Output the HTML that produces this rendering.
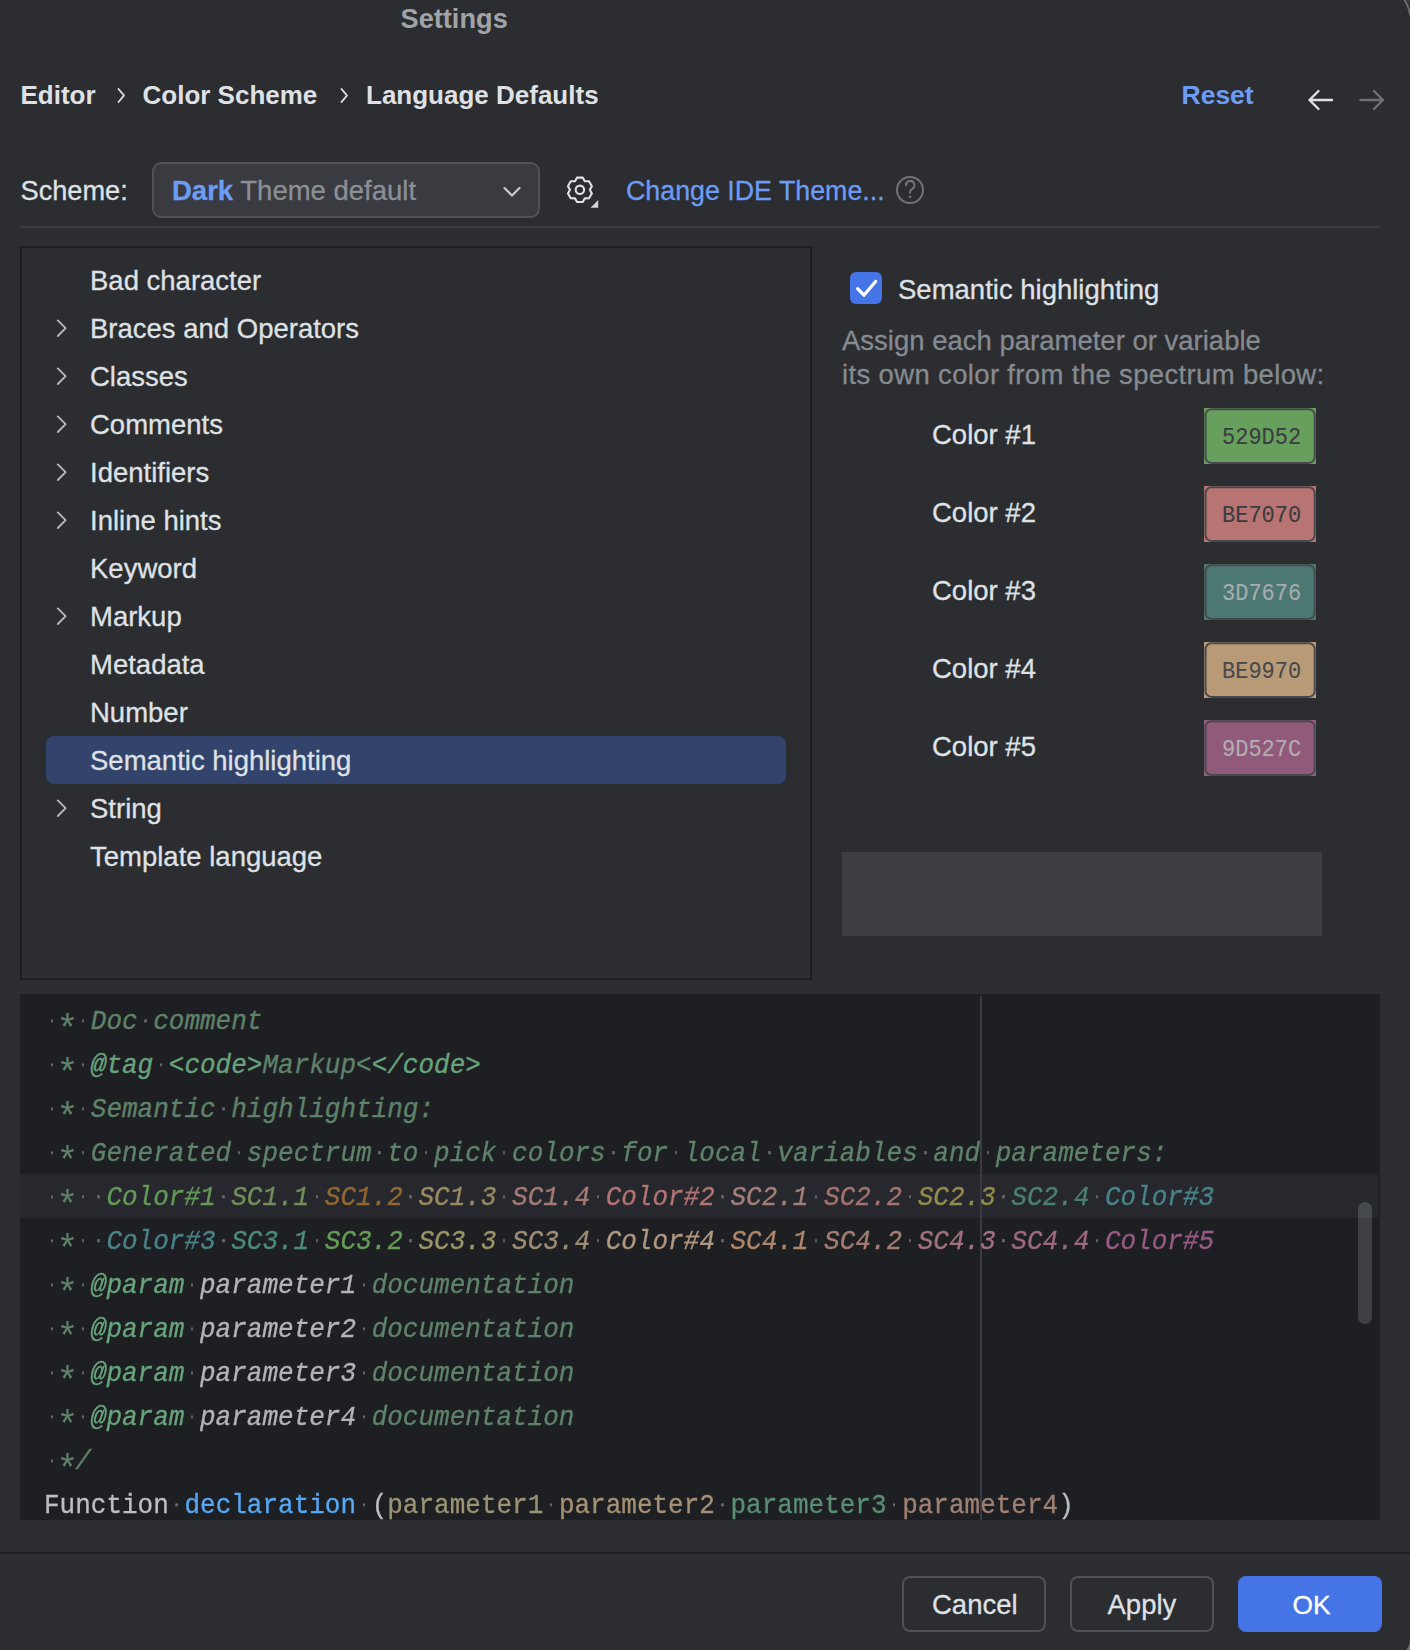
<!DOCTYPE html>
<html><head><meta charset="utf-8"><style>
html,body{margin:0;padding:0;}
body{width:1410px;height:1650px;background:#2B2D30;position:relative;overflow:hidden;font-family:'Liberation Sans', sans-serif;}
.t{position:absolute;white-space:pre;-webkit-text-stroke:0.3px currentColor;}
.b{position:absolute;}
.sp{display:inline-block;width:15.602px;height:2.6px;vertical-align:6.3px;position:relative;}
.sp::after{content:"";position:absolute;left:6.5px;top:0;width:2.4px;height:2.4px;border-radius:50%;background:#63666C;}
.as{display:inline-block;font-style:normal;transform-origin:7.8px 7.7px;transform:translate(-0.3px,3.6px) scale(1.4);-webkit-text-stroke:0;}
</style></head><body>
<div class="t" style="left:400.5px;top:-1.80px;font-size:27.2px;line-height:41px;font-weight:700;color:#A0A3A8;font-family:'Liberation Sans', sans-serif;font-style:normal;-webkit-text-stroke:0;">Settings</div>
<div class="t" style="left:20.5px;top:75.50px;font-size:26px;line-height:39px;font-weight:700;color:#DFE1E5;font-family:'Liberation Sans', sans-serif;font-style:normal;-webkit-text-stroke:0;">Editor</div>
<div class="t" style="left:142.5px;top:75.50px;font-size:26px;line-height:39px;font-weight:700;color:#DFE1E5;font-family:'Liberation Sans', sans-serif;font-style:normal;-webkit-text-stroke:0;">Color Scheme</div>
<div class="t" style="left:366px;top:75.50px;font-size:26px;line-height:39px;font-weight:700;color:#DFE1E5;font-family:'Liberation Sans', sans-serif;font-style:normal;-webkit-text-stroke:0;">Language Defaults</div>
<div class="t" style="left:1181.5px;top:75.00px;font-size:26.5px;line-height:40px;font-weight:700;color:#6C9CF5;font-family:'Liberation Sans', sans-serif;font-style:normal;-webkit-text-stroke:0;">Reset</div>
<div class="t" style="left:20.5px;top:170.00px;font-size:27.2px;line-height:41px;font-weight:400;color:#DFE1E5;font-family:'Liberation Sans', sans-serif;font-style:normal;">Scheme:</div>
<div class="b" style="left:152px;top:162px;width:388px;height:56px;box-sizing:border-box;border:2px solid #4E5157;border-radius:9px;background:#393B40;"></div>
<div class="t" style="left:172px;top:170.00px;font-size:27.5px;line-height:41px;font-weight:400;color:#DFE1E5;font-family:'Liberation Sans', sans-serif;font-style:normal;"><b style="color:#6C9CF5">Dark</b><span style="color:#8C8F96"> Theme default</span></div>
<div class="t" style="left:626px;top:171.00px;font-size:26.8px;line-height:40px;font-weight:400;color:#6C9CF5;font-family:'Liberation Sans', sans-serif;font-style:normal;">Change IDE Theme...</div>
<div class="b" style="left:20px;top:226px;width:1360px;height:2px;background:#393B40;"></div>
<div class="b" style="left:20px;top:246px;width:792px;height:734px;box-sizing:border-box;border:2px solid #1E1F22;"></div>
<div class="b" style="left:46px;top:736px;width:740px;height:48px;background:#32436C;border-radius:8px;"></div>
<div class="t" style="left:90px;top:260.00px;font-size:27.5px;line-height:41px;font-weight:400;color:#DFE1E5;font-family:'Liberation Sans', sans-serif;font-style:normal;">Bad character</div>
<div class="t" style="left:90px;top:308.00px;font-size:27.5px;line-height:41px;font-weight:400;color:#DFE1E5;font-family:'Liberation Sans', sans-serif;font-style:normal;">Braces and Operators</div>
<div class="t" style="left:90px;top:356.00px;font-size:27.5px;line-height:41px;font-weight:400;color:#DFE1E5;font-family:'Liberation Sans', sans-serif;font-style:normal;">Classes</div>
<div class="t" style="left:90px;top:404.00px;font-size:27.5px;line-height:41px;font-weight:400;color:#DFE1E5;font-family:'Liberation Sans', sans-serif;font-style:normal;">Comments</div>
<div class="t" style="left:90px;top:452.00px;font-size:27.5px;line-height:41px;font-weight:400;color:#DFE1E5;font-family:'Liberation Sans', sans-serif;font-style:normal;">Identifiers</div>
<div class="t" style="left:90px;top:500.00px;font-size:27.5px;line-height:41px;font-weight:400;color:#DFE1E5;font-family:'Liberation Sans', sans-serif;font-style:normal;">Inline hints</div>
<div class="t" style="left:90px;top:548.00px;font-size:27.5px;line-height:41px;font-weight:400;color:#DFE1E5;font-family:'Liberation Sans', sans-serif;font-style:normal;">Keyword</div>
<div class="t" style="left:90px;top:596.00px;font-size:27.5px;line-height:41px;font-weight:400;color:#DFE1E5;font-family:'Liberation Sans', sans-serif;font-style:normal;">Markup</div>
<div class="t" style="left:90px;top:644.00px;font-size:27.5px;line-height:41px;font-weight:400;color:#DFE1E5;font-family:'Liberation Sans', sans-serif;font-style:normal;">Metadata</div>
<div class="t" style="left:90px;top:692.00px;font-size:27.5px;line-height:41px;font-weight:400;color:#DFE1E5;font-family:'Liberation Sans', sans-serif;font-style:normal;">Number</div>
<div class="t" style="left:90px;top:740.00px;font-size:27.5px;line-height:41px;font-weight:400;color:#DFE1E5;font-family:'Liberation Sans', sans-serif;font-style:normal;">Semantic highlighting</div>
<div class="t" style="left:90px;top:788.00px;font-size:27.5px;line-height:41px;font-weight:400;color:#DFE1E5;font-family:'Liberation Sans', sans-serif;font-style:normal;">String</div>
<div class="t" style="left:90px;top:836.00px;font-size:27.5px;line-height:41px;font-weight:400;color:#DFE1E5;font-family:'Liberation Sans', sans-serif;font-style:normal;">Template language</div>
<div class="b" style="left:850px;top:272px;width:32px;height:32px;background:#4574E6;border-radius:6px;"></div>
<div class="t" style="left:898px;top:269.00px;font-size:27.5px;line-height:41px;font-weight:400;color:#DFE1E5;font-family:'Liberation Sans', sans-serif;font-style:normal;">Semantic highlighting</div>
<div class="t" style="left:842px;top:320.20px;font-size:27.5px;line-height:41px;font-weight:400;color:#868A91;font-family:'Liberation Sans', sans-serif;font-style:normal;">Assign each parameter or variable</div>
<div class="t" style="left:842px;top:354.00px;font-size:27.5px;line-height:41px;font-weight:400;color:#868A91;font-family:'Liberation Sans', sans-serif;font-style:normal;letter-spacing:0.35px;">its own color from the spectrum below:</div>
<div class="t" style="left:932px;top:414.00px;font-size:27.5px;line-height:41px;font-weight:400;color:#DFE1E5;font-family:'Liberation Sans', sans-serif;font-style:normal;">Color #1</div>
<div class="b" style="left:1204px;top:408px;width:112px;height:56px;background:#67A05D;"></div>
<div class="t" style="left:1222px;top:422.30px;font-size:22px;line-height:33px;font-weight:400;color:#3A3C40;font-family:'Liberation Mono', monospace;font-style:normal;-webkit-text-stroke:0.1px currentColor;transform-origin:0 22.00px;transform:scaleY(1.1);">529D52</div>
<div class="t" style="left:932px;top:492.00px;font-size:27.5px;line-height:41px;font-weight:400;color:#DFE1E5;font-family:'Liberation Sans', sans-serif;font-style:normal;">Color #2</div>
<div class="b" style="left:1204px;top:486px;width:112px;height:56px;background:#B87472;"></div>
<div class="t" style="left:1222px;top:500.30px;font-size:22px;line-height:33px;font-weight:400;color:#3A3C40;font-family:'Liberation Mono', monospace;font-style:normal;-webkit-text-stroke:0.1px currentColor;transform-origin:0 22.00px;transform:scaleY(1.1);">BE7070</div>
<div class="t" style="left:932px;top:570.00px;font-size:27.5px;line-height:41px;font-weight:400;color:#DFE1E5;font-family:'Liberation Sans', sans-serif;font-style:normal;">Color #3</div>
<div class="b" style="left:1204px;top:564px;width:112px;height:56px;background:#4C7874;"></div>
<div class="t" style="left:1222px;top:578.30px;font-size:22px;line-height:33px;font-weight:400;color:#A9ABAE;font-family:'Liberation Mono', monospace;font-style:normal;-webkit-text-stroke:0.1px currentColor;transform-origin:0 22.00px;transform:scaleY(1.1);">3D7676</div>
<div class="t" style="left:932px;top:648.00px;font-size:27.5px;line-height:41px;font-weight:400;color:#DFE1E5;font-family:'Liberation Sans', sans-serif;font-style:normal;">Color #4</div>
<div class="b" style="left:1204px;top:642px;width:112px;height:56px;background:#B89B76;"></div>
<div class="t" style="left:1222px;top:656.30px;font-size:22px;line-height:33px;font-weight:400;color:#48494C;font-family:'Liberation Mono', monospace;font-style:normal;-webkit-text-stroke:0.1px currentColor;transform-origin:0 22.00px;transform:scaleY(1.1);">BE9970</div>
<div class="t" style="left:932px;top:726.00px;font-size:27.5px;line-height:41px;font-weight:400;color:#DFE1E5;font-family:'Liberation Sans', sans-serif;font-style:normal;">Color #5</div>
<div class="b" style="left:1204px;top:720px;width:112px;height:56px;background:#915A7B;"></div>
<div class="t" style="left:1222px;top:734.30px;font-size:22px;line-height:33px;font-weight:400;color:#B3AEB2;font-family:'Liberation Mono', monospace;font-style:normal;-webkit-text-stroke:0.1px currentColor;transform-origin:0 22.00px;transform:scaleY(1.1);">9D527C</div>
<div class="b" style="left:842px;top:852px;width:480px;height:84px;background:#3D3E41;"></div>
<div class="b" style="left:20px;top:994px;width:1360px;height:526px;background:#1E1F22;"></div>
<div class="b" style="left:20px;top:1174px;width:1358px;height:44px;background:#26282D;"></div>
<div class="b" style="left:980px;top:996px;width:2px;height:524px;background:#393B40;"></div>
<div class="b" style="left:1358px;top:1202px;width:14px;height:122px;background:rgba(225,230,240,0.17);border-radius:7px;"></div>
<div class="t" style="left:44px;top:1003.30px;font-size:26px;line-height:39px;font-weight:400;color:#5F826B;font-family:'Liberation Mono', monospace;font-style:normal;-webkit-text-stroke:0.3px currentColor;transform-origin:0 26.50px;transform:scaleY(1.08);"><span style="color:#5F826B;font-style:italic"><i class="sp"></i><i class="as">*</i><i class="sp"></i>Doc<i class="sp"></i>comment</span></div>
<div class="t" style="left:44px;top:1047.30px;font-size:26px;line-height:39px;font-weight:400;color:#5F826B;font-family:'Liberation Mono', monospace;font-style:normal;-webkit-text-stroke:0.3px currentColor;transform-origin:0 26.50px;transform:scaleY(1.08);"><span style="color:#5F826B;font-style:italic"><i class="sp"></i><i class="as">*</i><i class="sp"></i></span><span style="color:#67A37C;font-style:italic">@tag</span><span style="color:#5F826B;font-style:italic"><i class="sp"></i></span><span style="color:#67A37C;font-style:italic">&lt;code&gt;</span><span style="color:#5F826B;font-style:italic">Markup&lt;</span><span style="color:#67A37C;font-style:italic">&lt;/code&gt;</span></div>
<div class="t" style="left:44px;top:1091.30px;font-size:26px;line-height:39px;font-weight:400;color:#5F826B;font-family:'Liberation Mono', monospace;font-style:normal;-webkit-text-stroke:0.3px currentColor;transform-origin:0 26.50px;transform:scaleY(1.08);"><span style="color:#5F826B;font-style:italic"><i class="sp"></i><i class="as">*</i><i class="sp"></i>Semantic<i class="sp"></i>highlighting:</span></div>
<div class="t" style="left:44px;top:1135.30px;font-size:26px;line-height:39px;font-weight:400;color:#5F826B;font-family:'Liberation Mono', monospace;font-style:normal;-webkit-text-stroke:0.3px currentColor;transform-origin:0 26.50px;transform:scaleY(1.08);"><span style="color:#5F826B;font-style:italic"><i class="sp"></i><i class="as">*</i><i class="sp"></i>Generated<i class="sp"></i>spectrum<i class="sp"></i>to<i class="sp"></i>pick<i class="sp"></i>colors<i class="sp"></i>for<i class="sp"></i>local<i class="sp"></i>variables<i class="sp"></i>and<i class="sp"></i>parameters:</span></div>
<div class="t" style="left:44px;top:1179.30px;font-size:26px;line-height:39px;font-weight:400;color:#5F826B;font-family:'Liberation Mono', monospace;font-style:normal;-webkit-text-stroke:0.3px currentColor;transform-origin:0 26.50px;transform:scaleY(1.08);"><span style="color:#5F826B;font-style:italic"><i class="sp"></i><i class="as">*</i><i class="sp"></i><i class="sp"></i></span><span style="color:#639957;font-style:italic">Color#1</span><span style="color:#5F826B;font-style:italic"><i class="sp"></i></span><span style="color:#748E5B;font-style:italic">SC1.1</span><span style="color:#5F826B;font-style:italic"><i class="sp"></i></span><span style="color:#926731;font-style:italic">SC1.2</span><span style="color:#5F826B;font-style:italic"><i class="sp"></i></span><span style="color:#988A61;font-style:italic">SC1.3</span><span style="color:#5F826B;font-style:italic"><i class="sp"></i></span><span style="color:#A37A74;font-style:italic">SC1.4</span><span style="color:#5F826B;font-style:italic"><i class="sp"></i></span><span style="color:#B27373;font-style:italic">Color#2</span><span style="color:#5F826B;font-style:italic"><i class="sp"></i></span><span style="color:#A47E78;font-style:italic">SC2.1</span><span style="color:#5F826B;font-style:italic"><i class="sp"></i></span><span style="color:#A3726D;font-style:italic">SC2.2</span><span style="color:#5F826B;font-style:italic"><i class="sp"></i></span><span style="color:#918C4D;font-style:italic">SC2.3</span><span style="color:#5F826B;font-style:italic"><i class="sp"></i></span><span style="color:#4C7E74;font-style:italic">SC2.4</span><span style="color:#5F826B;font-style:italic"><i class="sp"></i></span><span style="color:#498388;font-style:italic">Color#3</span></div>
<div class="t" style="left:44px;top:1223.30px;font-size:26px;line-height:39px;font-weight:400;color:#5F826B;font-family:'Liberation Mono', monospace;font-style:normal;-webkit-text-stroke:0.3px currentColor;transform-origin:0 26.50px;transform:scaleY(1.08);"><span style="color:#5F826B;font-style:italic"><i class="sp"></i><i class="as">*</i><i class="sp"></i><i class="sp"></i></span><span style="color:#498388;font-style:italic">Color#3</span><span style="color:#5F826B;font-style:italic"><i class="sp"></i></span><span style="color:#4C8B78;font-style:italic">SC3.1</span><span style="color:#5F826B;font-style:italic"><i class="sp"></i></span><span style="color:#649D56;font-style:italic">SC3.2</span><span style="color:#5F826B;font-style:italic"><i class="sp"></i></span><span style="color:#9A946A;font-style:italic">SC3.3</span><span style="color:#5F826B;font-style:italic"><i class="sp"></i></span><span style="color:#9E8D75;font-style:italic">SC3.4</span><span style="color:#5F826B;font-style:italic"><i class="sp"></i></span><span style="color:#B09880;font-style:italic">Color#4</span><span style="color:#5F826B;font-style:italic"><i class="sp"></i></span><span style="color:#AD856A;font-style:italic">SC4.1</span><span style="color:#5F826B;font-style:italic"><i class="sp"></i></span><span style="color:#A47D72;font-style:italic">SC4.2</span><span style="color:#5F826B;font-style:italic"><i class="sp"></i></span><span style="color:#A27081;font-style:italic">SC4.3</span><span style="color:#5F826B;font-style:italic"><i class="sp"></i></span><span style="color:#9B6982;font-style:italic">SC4.4</span><span style="color:#5F826B;font-style:italic"><i class="sp"></i></span><span style="color:#985A84;font-style:italic">Color#5</span></div>
<div class="t" style="left:44px;top:1267.30px;font-size:26px;line-height:39px;font-weight:400;color:#5F826B;font-family:'Liberation Mono', monospace;font-style:normal;-webkit-text-stroke:0.3px currentColor;transform-origin:0 26.50px;transform:scaleY(1.08);"><span style="color:#5F826B;font-style:italic"><i class="sp"></i><i class="as">*</i><i class="sp"></i></span><span style="color:#67A37C;font-style:italic">@param</span><span style="color:#5F826B;font-style:italic"><i class="sp"></i></span><span style="color:#B2B4BA;font-style:italic">parameter1</span><span style="color:#5F826B;font-style:italic"><i class="sp"></i>documentation</span></div>
<div class="t" style="left:44px;top:1311.30px;font-size:26px;line-height:39px;font-weight:400;color:#5F826B;font-family:'Liberation Mono', monospace;font-style:normal;-webkit-text-stroke:0.3px currentColor;transform-origin:0 26.50px;transform:scaleY(1.08);"><span style="color:#5F826B;font-style:italic"><i class="sp"></i><i class="as">*</i><i class="sp"></i></span><span style="color:#67A37C;font-style:italic">@param</span><span style="color:#5F826B;font-style:italic"><i class="sp"></i></span><span style="color:#B2B4BA;font-style:italic">parameter2</span><span style="color:#5F826B;font-style:italic"><i class="sp"></i>documentation</span></div>
<div class="t" style="left:44px;top:1355.30px;font-size:26px;line-height:39px;font-weight:400;color:#5F826B;font-family:'Liberation Mono', monospace;font-style:normal;-webkit-text-stroke:0.3px currentColor;transform-origin:0 26.50px;transform:scaleY(1.08);"><span style="color:#5F826B;font-style:italic"><i class="sp"></i><i class="as">*</i><i class="sp"></i></span><span style="color:#67A37C;font-style:italic">@param</span><span style="color:#5F826B;font-style:italic"><i class="sp"></i></span><span style="color:#B2B4BA;font-style:italic">parameter3</span><span style="color:#5F826B;font-style:italic"><i class="sp"></i>documentation</span></div>
<div class="t" style="left:44px;top:1399.30px;font-size:26px;line-height:39px;font-weight:400;color:#5F826B;font-family:'Liberation Mono', monospace;font-style:normal;-webkit-text-stroke:0.3px currentColor;transform-origin:0 26.50px;transform:scaleY(1.08);"><span style="color:#5F826B;font-style:italic"><i class="sp"></i><i class="as">*</i><i class="sp"></i></span><span style="color:#67A37C;font-style:italic">@param</span><span style="color:#5F826B;font-style:italic"><i class="sp"></i></span><span style="color:#B2B4BA;font-style:italic">parameter4</span><span style="color:#5F826B;font-style:italic"><i class="sp"></i>documentation</span></div>
<div class="t" style="left:44px;top:1443.30px;font-size:26px;line-height:39px;font-weight:400;color:#5F826B;font-family:'Liberation Mono', monospace;font-style:normal;-webkit-text-stroke:0.3px currentColor;transform-origin:0 26.50px;transform:scaleY(1.08);"><span style="color:#5F826B;font-style:italic"><i class="sp"></i><i class="as">*</i>/</span></div>
<div class="t" style="left:44px;top:1487.30px;font-size:26px;line-height:39px;font-weight:400;color:#5F826B;font-family:'Liberation Mono', monospace;font-style:normal;-webkit-text-stroke:0.3px currentColor;transform-origin:0 26.50px;transform:scaleY(1.08);"><span style="color:#BCBEC4;font-style:normal">Function</span><span style="color:#5F826B;font-style:italic"><i class="sp"></i></span><span style="color:#56A8F5;font-style:normal">declaration</span><span style="color:#5F826B;font-style:italic"><i class="sp"></i></span><span style="color:#BCBEC4;font-style:normal">(</span><span style="color:#9A9474;font-style:normal">parameter1</span><span style="color:#5F826B;font-style:italic"><i class="sp"></i></span><span style="color:#A49175;font-style:normal">parameter2</span><span style="color:#5F826B;font-style:italic"><i class="sp"></i></span><span style="color:#598E74;font-style:normal">parameter3</span><span style="color:#5F826B;font-style:italic"><i class="sp"></i></span><span style="color:#9F8072;font-style:normal">parameter4</span><span style="color:#BCBEC4;font-style:normal">)</span></div>
<div class="b" style="left:0px;top:1552px;width:1410px;height:2px;background:#1E1F22;"></div>
<div class="b" style="left:902px;top:1576px;width:144px;height:56px;box-sizing:border-box;border:2px solid #4E5157;border-radius:8px;"></div>
<div class="b" style="left:1070px;top:1576px;width:144px;height:56px;box-sizing:border-box;border:2px solid #4E5157;border-radius:8px;"></div>
<div class="b" style="left:1238px;top:1576px;width:144px;height:56px;background:#4574E6;border-radius:8px;"></div>
<div class="t" style="left:932px;top:1584.00px;font-size:27.5px;line-height:41px;font-weight:400;color:#DFE1E5;font-family:'Liberation Sans', sans-serif;font-style:normal;">Cancel</div>
<div class="t" style="left:1107.5px;top:1584.00px;font-size:27.5px;line-height:41px;font-weight:400;color:#DFE1E5;font-family:'Liberation Sans', sans-serif;font-style:normal;">Apply</div>
<div class="t" style="left:1292.5px;top:1585.50px;font-size:26.3px;line-height:39px;font-weight:400;color:#FFFFFF;font-family:'Liberation Sans', sans-serif;font-style:normal;">OK</div>
<svg class="b" style="left:0;top:0" width="1410" height="1650" viewBox="0 0 1410 1650"><path d="M118.5 89 L124 95.5 L118.5 102" fill="none" stroke="#DFE1E5" stroke-width="1.9" stroke-linecap="round" stroke-linejoin="round"/><path d="M341.5 89 L347 95.5 L341.5 102" fill="none" stroke="#DFE1E5" stroke-width="1.9" stroke-linecap="round" stroke-linejoin="round"/><path d="M1332 100 H1309.5 M1318.5 91 L1309.5 100 L1318.5 109" fill="none" stroke="#DFE1E5" stroke-width="2.4" stroke-linecap="round" stroke-linejoin="round"/><path d="M1360.5 100 H1383 M1374 91 L1383 100 L1374 109" fill="none" stroke="#6F7073" stroke-width="2.4" stroke-linecap="round" stroke-linejoin="round"/><path d="M504.5 188 L512 195.5 L519.5 188" fill="none" stroke="#CED0D6" stroke-width="2.1" stroke-linecap="round" stroke-linejoin="round"/><path d="M577.09 177.62 L582.71 177.62 L584.85 181.23 L589.04 181.28 L591.85 186.15 L589.80 189.80 L591.85 193.45 L589.04 198.32 L584.85 198.37 L582.71 201.98 L577.09 201.98 L574.95 198.37 L570.76 198.32 L567.95 193.45 L570.00 189.80 L567.95 186.15 L570.76 181.28 L574.95 181.23 Z" fill="none" stroke="#DFE1E5" stroke-width="2.1" stroke-linejoin="round"/><circle cx="579.9" cy="189.8" r="4.2" fill="none" stroke="#DFE1E5" stroke-width="2.1"/><path d="M590.5 207.8 L598.2 200 L598.2 207.8 Z" fill="#D2D4D8"/><circle cx="910" cy="190" r="13" fill="none" stroke="#6F737A" stroke-width="2"/><path d="M906 185.2 a4.2 4.2 0 1 1 6.3 3.6 c-1.1 .7 -2.3 1.5 -2.3 3.4 v0.6" fill="none" stroke="#6F737A" stroke-width="2.1" stroke-linecap="round"/><circle cx="910" cy="196.8" r="1.4" fill="#6F737A"/><path d="M57.8 320.4 L65.6 328.2 L57.8 336" fill="none" stroke="#B4B8BF" stroke-width="1.9" stroke-linecap="round" stroke-linejoin="round"/><path d="M57.8 368.4 L65.6 376.2 L57.8 384" fill="none" stroke="#B4B8BF" stroke-width="1.9" stroke-linecap="round" stroke-linejoin="round"/><path d="M57.8 416.4 L65.6 424.2 L57.8 432" fill="none" stroke="#B4B8BF" stroke-width="1.9" stroke-linecap="round" stroke-linejoin="round"/><path d="M57.8 464.4 L65.6 472.2 L57.8 480" fill="none" stroke="#B4B8BF" stroke-width="1.9" stroke-linecap="round" stroke-linejoin="round"/><path d="M57.8 512.4 L65.6 520.2 L57.8 528" fill="none" stroke="#B4B8BF" stroke-width="1.9" stroke-linecap="round" stroke-linejoin="round"/><path d="M57.8 608.4 L65.6 616.2 L57.8 624" fill="none" stroke="#B4B8BF" stroke-width="1.9" stroke-linecap="round" stroke-linejoin="round"/><path d="M57.8 800.4 L65.6 808.2 L57.8 816" fill="none" stroke="#B4B8BF" stroke-width="1.9" stroke-linecap="round" stroke-linejoin="round"/><path d="M857.6 288.7 L863.9 295.2 L875.6 281.5" fill="none" stroke="#FFFFFF" stroke-width="3.3" stroke-linecap="round" stroke-linejoin="round"/><rect x="1205.5" y="409.3" width="109.2" height="53.6" rx="6" fill="none" stroke="#47494E" stroke-width="2"/><rect x="1205.5" y="487.3" width="109.2" height="53.6" rx="6" fill="none" stroke="#47494E" stroke-width="2"/><rect x="1205.5" y="565.3" width="109.2" height="53.6" rx="6" fill="none" stroke="#47494E" stroke-width="2"/><rect x="1205.5" y="643.3" width="109.2" height="53.6" rx="6" fill="none" stroke="#47494E" stroke-width="2"/><rect x="1205.5" y="721.3" width="109.2" height="53.6" rx="6" fill="none" stroke="#47494E" stroke-width="2"/><path d="M1406 0 Q1410 5 1410 9 V0 Z" fill="#3A3C40"/><path d="M1404.5 0 Q1408.5 5.5 1410 15" fill="none" stroke="#6E7174" stroke-width="1.8"/><path d="M1410 1641 Q1409 1647.5 1406 1650 H1410 Z" fill="#6E7174"/></svg>
</body></html>
